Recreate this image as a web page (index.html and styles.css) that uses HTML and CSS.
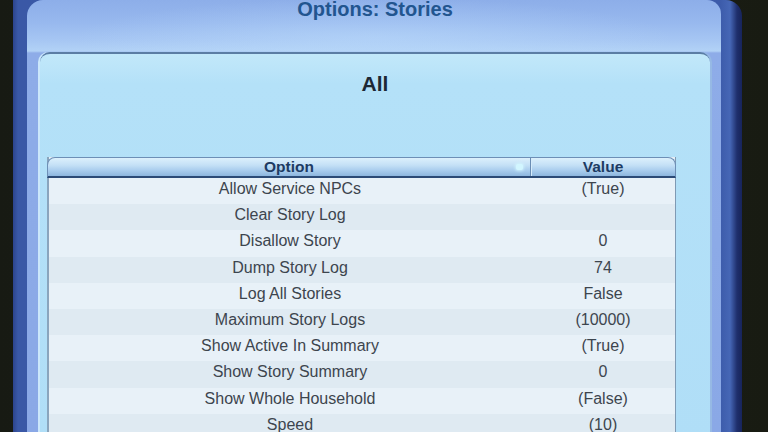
FILE: index.html
```html
<!DOCTYPE html>
<html lang="en">
<head>
<meta charset="utf-8">
<title>Options: Stories</title>
<link rel="stylesheet" href="styles.css">
</head>
<body>
<div class="frame">
  <div class="dialog">
    <h1 class="title">Options: Stories</h1>
    <section class="panel">
      <h2 class="heading">All</h2>
      <div class="table">
        <div class="thead">
          <div class="th th-option">Option<span class="sort"></span></div>
          <div class="th th-value">Value</div>
        </div>
        <div class="row"><span>Allow Service NPCs</span><span>(True)</span></div>
        <div class="row"><span>Clear Story Log</span><span></span></div>
        <div class="row"><span>Disallow Story</span><span>0</span></div>
        <div class="row"><span>Dump Story Log</span><span>74</span></div>
        <div class="row"><span>Log All Stories</span><span>False</span></div>
        <div class="row"><span>Maximum Story Logs</span><span>(10000)</span></div>
        <div class="row"><span>Show Active In Summary</span><span>(True)</span></div>
        <div class="row"><span>Show Story Summary</span><span>0</span></div>
        <div class="row"><span>Show Whole Household</span><span>(False)</span></div>
        <div class="row"><span>Speed</span><span>(10)</span></div>
      </div>
    </section>
  </div>
</div>
</body>
</html>
```
FILE: styles.css
```css
html, body {
  margin: 0;
  padding: 0;
}

body {
  width: 768px;
  height: 432px;
  overflow: hidden;
  background: linear-gradient(90deg, #171a13 0, #1d2117 50%, #181b12 100%);
  font-family: "Liberation Sans", Arial, sans-serif;
}

/* outer dark blue window frame */
.frame {
  margin-left: 13px;
  width: 729px;
  height: 432px;
  box-sizing: border-box;
  padding: 0 21px 0 14px;
  background: linear-gradient(90deg,
    #2c448c 0,
    #3a58a6 5px,
    #3c5baa calc(100% - 22px),
    #4667b6 calc(100% - 12px),
    #1f2f6c calc(100% - 5px),
    #17245a 100%);
  border-radius: 0 16px 0 0;
}

/* periwinkle dialog body */
.dialog {
  height: 100%;
  box-sizing: border-box;
  padding: 0 11px 0 13px;
  display: flex;
  flex-direction: column;
  border-radius: 16px 14px 0 0;
  background:
    radial-gradient(ellipse 300px 40px at 50% 38px, rgba(190, 222, 252, 0.45), transparent),
    linear-gradient(180deg, #8daee9 0, #97b8ee 22px, #a6c6f3 40px, #b2d2f6 51px, #8eace8 53px, #8aa8e6 100%);
}

.title {
  margin: 0;
  font-size: 20px;
  line-height: 19px;
  font-weight: bold;
  text-align: center;
  color: #22558f;
}

/* light cyan inner panel */
.panel {
  margin-top: 33px;
  flex: 1;
  display: flex;
  flex-direction: column;
  border-top: 2px solid #5b7da4;
  border-radius: 10px 10px 0 0;
  background: linear-gradient(180deg, #c2e8fa 0, #b4e1f8 30px, #b0def7 100%);
  box-shadow: -2px 0 0 #cbe7fb, 2px 0 0 #96b9e4;
}

.heading {
  margin: 18px 0 0;
  font-size: 21px;
  line-height: 24px;
  font-weight: bold;
  text-align: center;
  color: #1c2834;
}

.table {
  margin: 61px 34px 0 7px;
  flex: 1;
  display: flex;
  flex-direction: column;
  border-left: 2px solid #8aa5bd;
  border-right: 1px solid #7f9ab4;
  background: #e4eef6;
}

.thead {
  display: grid;
  grid-template-columns: 482px 1fr;
  height: 18px;
  margin: 0 -1px 0 -2px;
  border: 1px solid #6d8fb6;
  border-bottom: 2px solid #2b4a76;
  border-radius: 8px 8px 0 0;
  background: linear-gradient(180deg, #dcf0fc 0, #c4e0f6 40%, #a8cced 70%, #8db6de 100%);
}

.th {
  position: relative;
  font-size: 15.5px;
  line-height: 18px;
  font-weight: bold;
  text-align: center;
  color: #1d3b63;
}

.th-value {
  border-left: 1px solid #6a8db4;
  box-shadow: inset 1px 0 0 #d6ecfb;
}

/* glowing sort marker in the header */
.sort {
  position: absolute;
  right: 7px;
  top: 6px;
  width: 7px;
  height: 6px;
  border-radius: 2px;
  background: #d2f6ff;
  box-shadow: 0 0 3px 1px rgba(210, 246, 255, 0.8);
}

.row {
  display: grid;
  grid-template-columns: 482px 1fr;
  height: 26.2px;
  font-size: 16px;
  line-height: 21px;
  text-align: center;
  color: #3d454e;
}

.row:nth-child(even) {
  background: #e8f1f8;
}

.row:nth-child(odd) {
  background: #dfeaf2;
}
```
